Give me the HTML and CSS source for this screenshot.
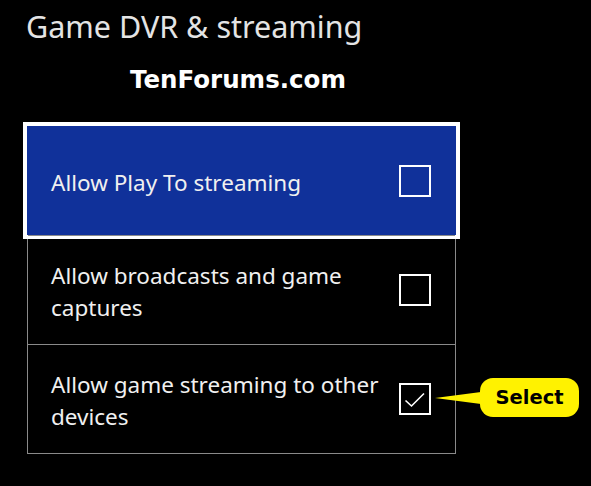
FILE: index.html
```html
<!DOCTYPE html>
<html>
<head>
<meta charset="utf-8">
<link rel="stylesheet" href="styles.css">
</head>
<body>
<div class="page">
  <h1 class="title">Game DVR &amp; streaming</h1>
  <div class="brand">TenForums.com</div>
  <ul class="list">
    <li class="item focused">
      <span class="label">Allow Play To streaming</span>
      <span class="check"></span>
    </li>
    <li class="item">
      <span class="label">Allow broadcasts and game captures</span>
      <span class="check"></span>
    </li>
    <li class="item">
      <span class="label">Allow game streaming to other devices</span>
      <span class="check checked">
        <svg viewBox="0 0 28 28" width="28" height="28"><path d="M4.5 15.5 L10.5 21 L23 8.5" fill="none" stroke="#fff" stroke-width="1.6"/></svg>
      </span>
      <div class="callout">
        <svg class="callout-tail" viewBox="0 0 46 14" width="46" height="14"><path d="M0 7 L46 1 L46 13 Z" fill="#fff200"/></svg>
        <span class="callout-text">Select</span>
      </div>
    </li>
  </ul>
</div>
</body>
</html>
```
FILE: styles.css
```css
html, body {
  margin: 0;
  padding: 0;
  background: #000;
}
.page {
  width: 591px;
  height: 486px;
  position: relative;
  overflow: hidden;
  font-family: "Noto Sans", "Open Sans", sans-serif;
  color: #ececec;
}
.title {
  margin: 0;
  padding: 6px 0 0 26px;
  font-weight: 400;
  font-size: 30.5px;
  line-height: 40px;
  color: #e4e4e4;
}
.brand {
  margin: 21px 0 0 130px;
  font-family: "DejaVu Sans", sans-serif;
  font-weight: 700;
  font-size: 24.5px;
  line-height: 26px;
  color: #fff;
}
.list {
  list-style: none;
  margin: 33px 0 0 27px;
  padding: 0;
  width: 429px;
  border: 1px solid #8a8a8a;
  border-top: none;
  box-sizing: border-box;
}
.item {
  position: relative;
  display: flex;
  align-items: center;
  justify-content: space-between;
  height: 109px;
  padding: 0 24px 0 23px;
  border-top: 1px solid #8a8a8a;
  box-sizing: border-box;
}
.item.focused {
  border-top: none;
  background: #10319a;
  outline: 4px solid #fff;
  margin: 0 -1px;
  padding: 0 25px 0 24px;
}
.label {
  font-size: 22.5px;
  line-height: 32px;
  max-width: 340px;
  padding-top: 4px;
  color: #f0f0f0;
}
.check {
  flex: none;
  width: 32px;
  height: 32px;
  border: 2px solid #fff;
  box-sizing: border-box;
  display: flex;
  align-items: center;
  justify-content: center;
}
.callout {
  position: absolute;
  left: 407px;
  top: 33px;
  display: flex;
  align-items: center;
}
.callout-tail {
  display: block;
  margin-right: -1px;
}
.callout-text {
  background: #fff200;
  border-radius: 13px;
  width: 99px;
  height: 39px;
  display: flex;
  align-items: center;
  justify-content: center;
  font-family: "DejaVu Sans", sans-serif;
  font-weight: 700;
  font-size: 19.5px;
  color: #000;
}
```
